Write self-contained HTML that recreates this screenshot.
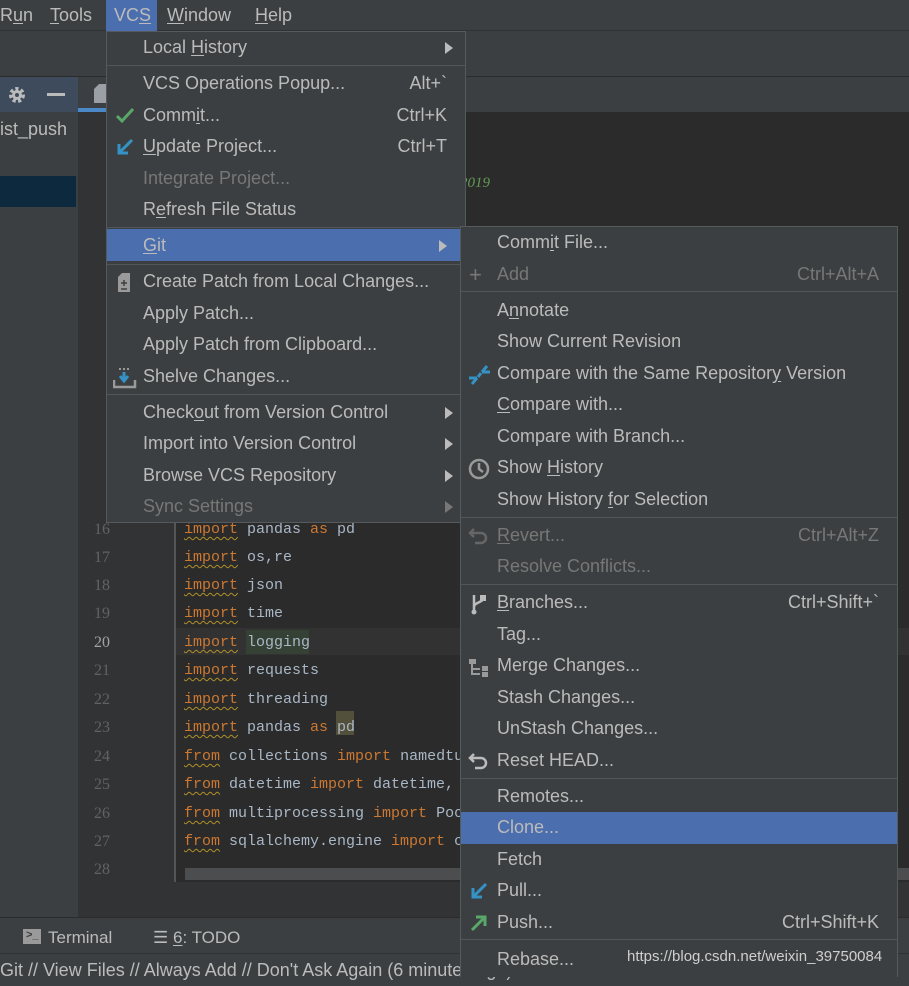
<!DOCTYPE html>
<html><head><meta charset="utf-8"><style>
*{margin:0;padding:0;box-sizing:border-box}
body{width:909px;height:977px;overflow:hidden;background:#3c3f41;position:relative;font-family:"Liberation Sans",sans-serif;color:#bbbbbb;font-size:18px}
.a{position:absolute}
.mi{position:absolute;height:31px;line-height:31px;white-space:nowrap}
.dis{color:#777777}
.sc{position:absolute;right:18px;top:0}
.sep{position:absolute;left:0;right:0;height:1px;background:#515658}
u{text-decoration:underline;text-underline-offset:2px}
.code{position:absolute;left:184px;font-family:"Liberation Mono",monospace;font-size:15px;color:#a9b7c6;white-space:nowrap}
.kw{color:#cc7832;text-decoration:underline wavy #b0902a;text-decoration-thickness:1px;text-underline-offset:3px}
.k2{color:#cc7832}
.ln{position:absolute;left:94px;font-family:"Liberation Serif",serif;font-size:16px;color:#606366}
.ic{position:absolute;left:8px;top:6px}
.arr{position:absolute;right:12px;top:10px;width:0;height:0;border-left:8px solid #bbb;border-top:6px solid transparent;border-bottom:6px solid transparent}
</style></head><body>
<div class="a" style="left:0;top:0;width:909px;height:31px;background:#3c3f41;border-bottom:1px solid #323232"></div>
<div class="a" style="left:106px;top:0;width:51px;height:31px;background:#4b6eaf"></div>
<div class="mi" style="left:0;top:0">R<u>u</u>n</div>
<div class="mi" style="left:50px;top:0"><u>T</u>ools</div>
<div class="mi" style="left:114px;top:0">VC<u>S</u></div>
<div class="mi" style="left:167px;top:0"><u>W</u>indow</div>
<div class="mi" style="left:255px;top:0"><u>H</u>elp</div>
<div class="a" style="left:0;top:31px;width:909px;height:46px;background:#3c3f41;border-bottom:1px solid #2b2b2b"></div>
<div class="a" style="left:0;top:77px;width:78px;height:35px;background:#3d4b5c"></div>
<svg class="a" style="left:6px;top:84px" width="22" height="22" viewBox="0 0 22 22"><circle cx="11" cy="11" r="6" fill="none" stroke="#bbb" stroke-width="4" stroke-dasharray="3 2.3"/><circle cx="11" cy="11" r="5" fill="#bbb"/><circle cx="11" cy="11" r="2" fill="#3d4b5c"/></svg>
<div class="a" style="left:47px;top:93px;width:18px;height:3px;background:#bbb"></div>
<div class="mi" style="left:0;top:114px">ist_push</div>
<div class="a" style="left:0;top:176px;width:76px;height:31px;background:#0d293e"></div>
<div class="a" style="left:78px;top:77px;width:831px;height:35px;background:#3c3f41"></div>
<div class="a" style="left:78px;top:108px;width:30px;height:4px;background:#4a88c7"></div>
<svg class="a" style="left:93px;top:84px" width="14" height="20"><path d="M1 5 L6 0 H13 V19 H1Z" fill="#9aa0a6"/></svg>
<div class="a" style="left:78px;top:112px;width:96px;height:770px;background:#313335"></div>
<div class="a" style="left:174px;top:112px;width:2px;height:770px;background:#555"></div>
<div class="a" style="left:176px;top:112px;width:733px;height:770px;background:#2b2b2b"></div>
<div class="a" style="left:176px;top:628px;width:733px;height:27px;background:#323232"></div>
<div class="a" style="left:246px;top:630px;width:63px;height:24px;background:#344134"></div>
<div class="a" style="left:336px;top:711px;width:18px;height:24px;background:#52503a"></div>
<div class="a" style="left:460px;top:175px;font-family:'Liberation Serif',serif;font-style:italic;color:#629755;font-size:15px">2019</div>
<div class="a" style="left:185px;top:868px;width:724px;height:12px;background:#4b4d4f"></div>
<div class="a" style="left:78px;top:882px;width:831px;height:36px;background:#313335"></div>
<div class="a" style="left:0;top:917px;width:909px;height:1px;background:#2b2b2b"></div>
<div class="ln" style="top:521px">16</div><div class="ln" style="top:549px">17</div><div class="ln" style="top:577px">18</div><div class="ln" style="top:605px">19</div><div class="ln" style="top:634px;color:#a4a3a3">20</div><div class="ln" style="top:662px">21</div><div class="ln" style="top:691px">22</div><div class="ln" style="top:719px">23</div><div class="ln" style="top:748px">24</div><div class="ln" style="top:776px">25</div><div class="ln" style="top:805px">26</div><div class="ln" style="top:833px">27</div><div class="ln" style="top:861px">28</div>
<div class="code" style="top:521px"><span class="kw">import</span> pandas <span class="k2">as</span> pd</div>
<div class="code" style="top:549px"><span class="kw">import</span> os,re</div>
<div class="code" style="top:577px"><span class="kw">import</span> json</div>
<div class="code" style="top:605px"><span class="kw">import</span> time</div>
<div class="code" style="top:634px"><span class="kw">import</span> logging</div>
<div class="code" style="top:662px"><span class="kw">import</span> requests</div>
<div class="code" style="top:691px"><span class="kw">import</span> threading</div>
<div class="code" style="top:719px"><span class="kw">import</span> pandas <span class="k2">as</span> pd</div>
<div class="code" style="top:748px"><span class="kw">from</span> collections <span class="k2">import</span> namedtuple</div>
<div class="code" style="top:776px"><span class="kw">from</span> datetime <span class="k2">import</span> datetime,</div>
<div class="code" style="top:805px"><span class="kw">from</span> multiprocessing <span class="k2">import</span> Pool</div>
<div class="code" style="top:833px"><span class="kw">from</span> sqlalchemy.engine <span class="k2">import</span> c</div>
<div class="a" style="left:0;top:918px;width:909px;height:35px;background:#3c3f41"></div>
<div class="a" style="left:23px;top:929px;width:18px;height:15px;background:#9a9a9a"></div>
<div class="a" style="left:26px;top:929px;font-size:11px;color:#3c3f41;font-weight:bold">&gt;_</div>
<div class="mi" style="left:48px;top:922px;font-size:17px">Terminal</div>
<div class="mi" style="left:153px;top:922px;font-size:17px">☰ <u>6</u>: TODO</div>
<div class="a" style="left:0;top:953px;width:909px;height:24px;background:#3c3f41;border-top:1px solid #323232"></div>
<div class="mi" style="left:0;top:955px;font-size:18px">Git // View Files // Always Add // Don't Ask Again (6 minutes ago)</div>
<div class="a" style="left:106px;top:31px;width:360px;height:492px;background:#3c3f41;border:1px solid #555a5c">
 <div class="mi" style="left:36px;top:0">Local <u>H</u>istory</div>
 <div class="arr" style="top:10px"></div>
 <div class="sep" style="top:33px"></div>
 <div class="mi" style="left:36px;top:36px;width:322px">VCS Operations Popup...<span class="sc">Alt+`</span></div>
 <div class="mi" style="left:0;top:68px;width:358px"><svg class="ic" width="20" height="18"><path d="M2 10 L7 15 L18 3" stroke="#59a869" stroke-width="3" fill="none"/></svg><span style="position:absolute;left:36px">Comm<u>i</u>t...</span><span class="sc">Ctrl+K</span></div>
 <div class="mi" style="left:0;top:99px;width:358px"><svg class="ic" width="20" height="20"><path d="M17 3 L5 15 M4 7 V16 H13" stroke="#3592c4" stroke-width="3" fill="none"/></svg><span style="position:absolute;left:36px"><u>U</u>pdate Project...</span><span class="sc">Ctrl+T</span></div>
 <div class="mi dis" style="left:36px;top:131px">Integrate Project...</div>
 <div class="mi" style="left:36px;top:162px">R<u>e</u>fresh File Status</div>
 <div class="sep" style="top:195px"></div>
 <div class="a" style="left:0;top:197px;width:353px;height:32px;background:#4b6eaf"></div>
 <div class="mi" style="left:36px;top:198px"><u>G</u>it</div>
 <div class="arr" style="top:208px;right:18px"></div>
 <div class="sep" style="top:232px"></div>
 <div class="mi" style="left:0;top:234px;width:358px"><svg class="ic" width="20" height="22" style="left:9px"><path d="M2 5 L6 1 H14 V20 H2Z" fill="#9a9a9a"/><path d="M5 11 H11 M8 8 V14 M5 17 H11" stroke="#3c3f41" stroke-width="1.5"/></svg><span style="position:absolute;left:36px">Create Patch from Local Changes...</span></div>
 <div class="mi" style="left:36px;top:266px">Apply Patch...</div>
 <div class="mi" style="left:36px;top:297px">Apply Patch from Clipboard...</div>
 <div class="mi" style="left:0;top:329px;width:358px"><svg class="ic" width="24" height="22" style="left:6px"><path d="M1 13 V20 H22 V13" stroke="#9a9a9a" stroke-width="2.5" fill="none"/><path d="M6 2h2M10 2h2M14 2h2" stroke="#9a9a9a" stroke-width="2"/><path d="M11 5 V12 M7 9 L11 14 L15 9" stroke="#3592c4" stroke-width="3" fill="none"/></svg><span style="position:absolute;left:36px">Shelve Changes...</span></div>
 <div class="sep" style="top:362px"></div>
 <div class="mi" style="left:36px;top:365px">Check<u>o</u>ut from Version Control</div><div class="arr" style="top:375px;right:12px"></div>
 <div class="mi" style="left:36px;top:396px">Import into Version Control</div><div class="arr" style="top:406px;right:12px"></div>
 <div class="mi" style="left:36px;top:428px">Browse VCS Repository</div><div class="arr" style="top:438px;right:12px"></div>
 <div class="mi dis" style="left:36px;top:459px">Sync Settings</div><div class="arr" style="top:469px;right:12px;border-left-color:#777"></div>
</div>
<div class="a" style="left:460px;top:226px;width:438px;height:751px;background:#3c3f41;border:1px solid #555a5c;border-bottom:none">
 <div class="mi" style="left:36px;top:0">Comm<u>i</u>t File...</div>
 <div class="mi dis" style="left:0;top:32px;width:436px"><span style="position:absolute;left:8px;font-size:22px">+</span><span style="position:absolute;left:36px">Add</span><span class="sc">Ctrl+Alt+A</span></div>
 <div class="sep" style="top:64px"></div>
 <div class="mi" style="left:36px;top:68px">A<u>n</u>notate</div>
 <div class="mi" style="left:36px;top:99px">Show Current Revision</div>
 <div class="mi" style="left:0;top:131px"><svg class="ic" width="24" height="22" style="left:7px"><path d="M1 14 H9 M9 14 L4 20 M22 8 H14 M14 8 L19 2 M13 9 L10 13" stroke="#3592c4" stroke-width="3" fill="none"/></svg><span style="position:absolute;left:36px">Compare with the Same Repositor<u>y</u> Version</span></div>
 <div class="mi" style="left:36px;top:162px"><u>C</u>ompare with...</div>
 <div class="mi" style="left:36px;top:194px">Compare with Branch...</div>
 <div class="mi" style="left:0;top:225px"><svg class="ic" width="22" height="22" style="left:7px"><circle cx="11" cy="11" r="9" stroke="#9a9a9a" stroke-width="2.5" fill="none"/><path d="M11 5 V11 L15 14" stroke="#9a9a9a" stroke-width="2.5" fill="none"/></svg><span style="position:absolute;left:36px">Show <u>H</u>istory</span></div>
 <div class="mi" style="left:36px;top:257px">Show History <u>f</u>or Selection</div>
 <div class="sep" style="top:290px"></div>
 <div class="mi dis" style="left:0;top:293px;width:436px"><svg class="ic" width="22" height="20" style="left:7px"><path d="M6 3 L2 7 L6 11 M2 7 H13 A5 5 0 0 1 13 17 H7" stroke="#666" stroke-width="2.5" fill="none"/></svg><span style="position:absolute;left:36px"><u>R</u>evert...</span><span class="sc">Ctrl+Alt+Z</span></div>
 <div class="mi dis" style="left:36px;top:324px">Resolve Conflicts...</div>
 <div class="sep" style="top:357px"></div>
 <div class="mi" style="left:0;top:360px;width:436px"><svg class="ic" width="20" height="22" style="left:9px"><path d="M4 2 V19 M4 14 C4 9 13 10 13 5" stroke="#bbb" stroke-width="2.5" fill="none"/><circle cx="4" cy="19" r="2.5" fill="#bbb"/><rect x="10" y="2" width="6" height="6" fill="#bbb"/></svg><span style="position:absolute;left:36px"><u>B</u>ranches...</span><span class="sc">Ctrl+Shift+`</span></div>
 <div class="mi" style="left:36px;top:392px">Tag...</div>
 <div class="mi" style="left:0;top:423px"><svg class="ic" width="24" height="22" style="left:7px"><rect x="1" y="3" width="7" height="5" fill="#9a9a9a"/><path d="M4 8 V18 H12 M4 13 H12" stroke="#9a9a9a" stroke-width="2" fill="none"/><rect x="14" y="10" width="6" height="5" fill="#9a9a9a"/><rect x="14" y="16" width="6" height="5" fill="#9a9a9a"/></svg><span style="position:absolute;left:36px">Merge Changes...</span></div>
 <div class="mi" style="left:36px;top:455px">Stash Changes...</div>
 <div class="mi" style="left:36px;top:486px">UnStash Changes...</div>
 <div class="mi" style="left:0;top:518px"><svg class="ic" width="22" height="20" style="left:7px"><path d="M6 3 L2 7 L6 11 M2 7 H13 A5 5 0 0 1 13 17 H7" stroke="#bbb" stroke-width="2.5" fill="none"/></svg><span style="position:absolute;left:36px">Reset HEAD...</span></div>
 <div class="sep" style="top:551px"></div>
 <div class="mi" style="left:36px;top:554px">Remotes...</div>
 <div class="a" style="left:0;top:585px;width:436px;height:32px;background:#4b6eaf"></div>
 <div class="mi" style="left:36px;top:585px">Clone...</div>
 <div class="mi" style="left:36px;top:617px">Fetch</div>
 <div class="mi" style="left:0;top:648px"><svg class="ic" width="20" height="20"><path d="M17 3 L5 15 M4 7 V16 H13" stroke="#3592c4" stroke-width="3" fill="none"/></svg><span style="position:absolute;left:36px">Pull...</span></div>
 <div class="mi" style="left:0;top:680px;width:436px"><svg class="ic" width="20" height="20"><path d="M3 17 L15 5 M7 4 H16 V13" stroke="#59a869" stroke-width="3" fill="none"/></svg><span style="position:absolute;left:36px">Push...</span><span class="sc">Ctrl+Shift+K</span></div>
 <div class="sep" style="top:712px"></div>
 <div class="mi" style="left:36px;top:717px">Rebase...</div>
</div>
<div class="a" style="left:627px;top:948px;font-size:15px;color:#cfcfcf;white-space:nowrap">https://blog.csdn.net/weixin_39750084</div>
</body></html>
